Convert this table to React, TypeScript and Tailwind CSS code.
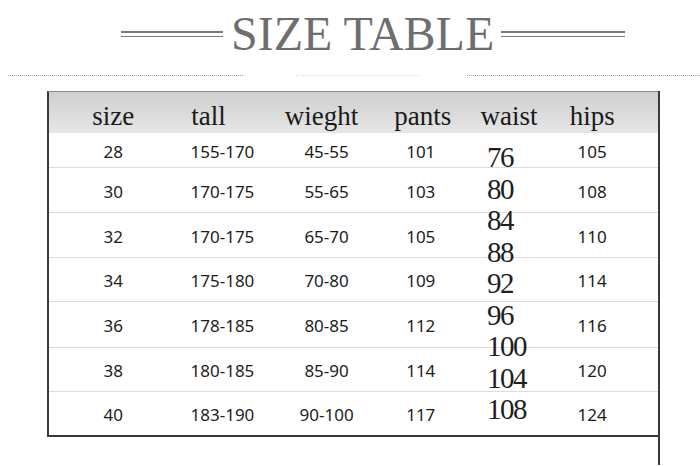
import React from "react"

const serif = { fontFamily: '"Liberation Serif", "Times New Roman", serif' }
const sans = { fontFamily: '"Noto Sans", "Open Sans", Arial, sans-serif' }

const rows = [
  { size: "28", tall: "155-170", weight: "45-55", pants: "101", hips: "105", h: "h-[35px]" },
  { size: "30", tall: "170-175", weight: "55-65", pants: "103", hips: "108", h: "h-[45px]" },
  { size: "32", tall: "170-175", weight: "65-70", pants: "105", hips: "110", h: "h-[45px]" },
  { size: "34", tall: "175-180", weight: "70-80", pants: "109", hips: "114", h: "h-[44px]" },
  { size: "36", tall: "178-185", weight: "80-85", pants: "112", hips: "116", h: "h-[46px]" },
  { size: "38", tall: "180-185", weight: "85-90", pants: "114", hips: "120", h: "h-[44px]" },
  { size: "40", tall: "183-190", weight: "90-100", pants: "117", hips: "124", h: "h-[43px]" },
]

const waistNums = ["76", "80", "84", "88", "92", "96", "100", "104", "108"]

function DoubleLine({ w }: { w: string }) {
  return (
    <div className={`${w} flex flex-col gap-[3px]`}>
      <div className="h-[1.5px] bg-[#7a7a7a]" />
      <div className="h-[1.5px] bg-[#7a7a7a]" />
    </div>
  )
}

export default function App() {
  return (
    <div className="w-[700px] h-[466px] bg-white overflow-hidden relative">
      {/* Titulo */}
      <div className="flex items-center pt-[8px] h-[60px]">
        <div className="ml-[121px]">
          <DoubleLine w="w-[102px]" />
        </div>
        <div
          className="mx-[8px] text-[48px] leading-none text-[#6e6e6e] whitespace-nowrap w-[262px] text-center"
          style={serif}
        >
          SIZE TABLE
        </div>
        <DoubleLine w="w-[124px]" />
      </div>

      {/* Lineas punteadas */}
      <div className="flex items-center mt-[13px] h-[4px]">
        <div className="ml-[8px] w-[235px] border-t border-dotted border-[#9a9a9a]" />
        <div className="ml-[53px] w-[124px] border-t border-dotted border-[#dedede]" />
        <div className="ml-[47px] w-[233px] border-t border-dotted border-[#a0a0a0]" />
      </div>

      {/* Tabla */}
      <div className="mt-[14px] ml-[47px] w-[613px] border-r-2 border-[#3a3a3a] h-[374px] relative">
        <div className="border-l-2 border-b-2 border-[#3a3a3a] border-t border-t-[#8a8a8a]">
          <div
            className="flex h-[41px] items-center pt-[8px] text-[27px] text-[#1a1a1a] bg-gradient-to-b from-[#cfcfcf] to-[#e6e6e6]"
            style={serif}
          >
            <div className="w-[119px] text-center pl-[10px]">size</div>
            <div className="w-[110px] text-center pr-[28px]">tall</div>
            <div className="w-[99px] text-center pr-[10px]">wieght</div>
            <div className="w-[90px] text-center pl-[4px]">pants</div>
            <div className="w-[87px] text-center">waist</div>
            <div className="w-[106px] text-center pr-[26px]">hips</div>
          </div>
          {rows.map((r, i) => (
            <div
              key={r.size}
              className={`flex items-center pt-[3px] ${r.h} text-[17px] text-[#1c1c1c] ${
                i < rows.length - 1 ? "border-b border-[#dcdcdc]" : ""
              }`}
              style={sans}
            >
              <div className="w-[119px] text-center pl-[10px]">{r.size}</div>
              <div className="w-[110px] text-center">{r.tall}</div>
              <div className="w-[99px] text-center">{r.weight}</div>
              <div className="w-[90px] text-center">{r.pants}</div>
              <div className="w-[87px]" />
              <div className="w-[106px] text-center pr-[26px]">{r.hips}</div>
            </div>
          ))}
        </div>

        {/* numeros de cintura superpuestos */}
        <div
          className="absolute left-[440px] top-[51px] flex flex-col text-[29px] leading-[31.5px] tracking-[-1.5px] text-[#1e1e1e]"
          style={serif}
        >
          {waistNums.map((n) => (
            <span key={n}>{n}</span>
          ))}
        </div>
      </div>
    </div>
  )
}
